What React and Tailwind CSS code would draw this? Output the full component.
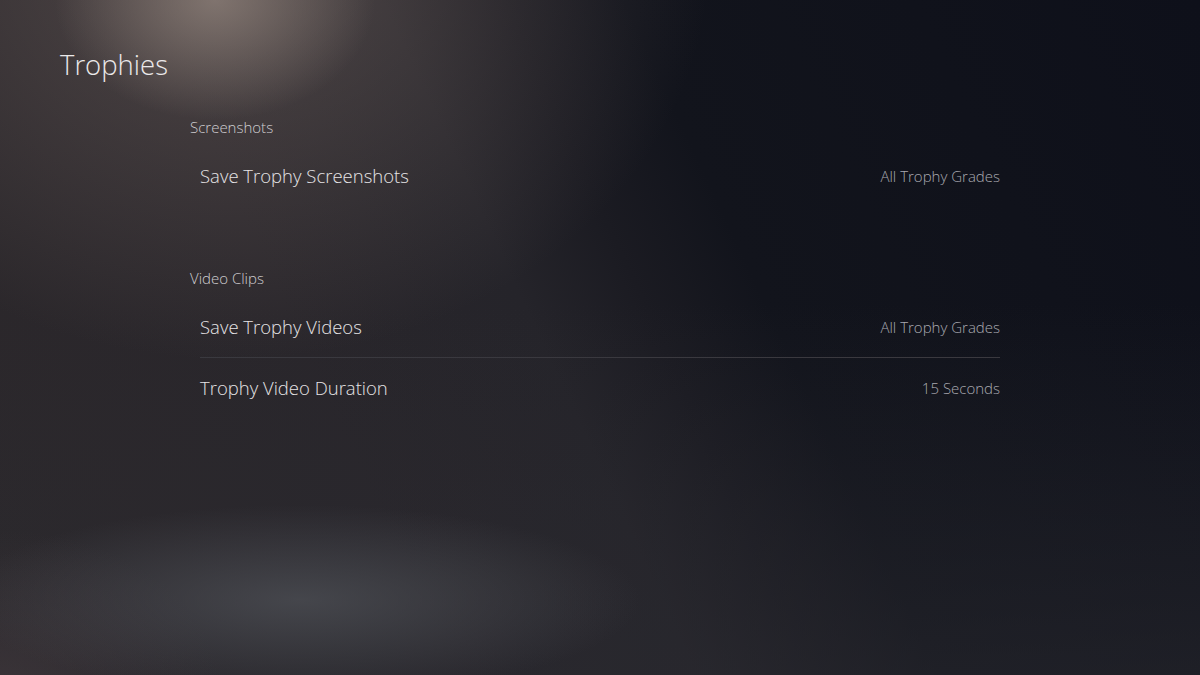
import React from "react";

function SectionHeader({ children, className = "" }) {
  return (
    <div className={`text-[15px] leading-[20px] text-[#cfcdd0] font-light ${className}`}>
      {children}
    </div>
  );
}

function Row({ label, value }) {
  return (
    <div className="h-[60px] pl-[10px] flex items-center justify-between">
      <span className="text-[18.5px] text-[#e6e4e6] font-light">{label}</span>
      <span className="text-[15px] text-[#a9a9b0] font-light">{value}</span>
    </div>
  );
}

export default function App() {
  return (
    <div
      className="relative w-[1200px] h-[675px] overflow-hidden bg-[radial-gradient(ellipse_160px_120px_at_215px_0px,rgba(150,136,128,0.7),transparent),radial-gradient(ellipse_480px_400px_at_230px_-40px,rgba(120,105,100,0.5),transparent),radial-gradient(ellipse_340px_95px_at_300px_600px,rgba(78,80,86,0.75),transparent),radial-gradient(ellipse_220px_160px_at_0px_690px,rgba(70,60,64,0.55),transparent),linear-gradient(to_top,rgba(42,42,48,0.55),transparent_55%),linear-gradient(65deg,#2c282b_0%,#29262b_30%,#25242a_46%,#1b1b22_54%,#12141c_62%,#0e101a_100%)]"
      style={{ fontFamily: '"Open Sans", "Noto Sans", sans-serif' }}
    >
      <div className="pt-[48px] pl-[60px]">
        <h1 className="text-[27.5px] leading-[34px] text-[#ebe9ea] font-light">Trophies</h1>
      </div>
      <div className="ml-[190px] w-[810px]">
        <SectionHeader className="mt-[35px]">Screenshots</SectionHeader>
        <div className="mt-[9px]">
          <Row label="Save Trophy Screenshots" value="All Trophy Grades" />
        </div>
        <SectionHeader className="mt-[62px]">Video Clips</SectionHeader>
        <div className="mt-[9px]">
          <Row label="Save Trophy Videos" value="All Trophy Grades" />
          <div className="ml-[10px] h-px bg-[#3a393f]" />
          <Row label="Trophy Video Duration" value="15 Seconds" />
        </div>
      </div>
    </div>
  );
}
